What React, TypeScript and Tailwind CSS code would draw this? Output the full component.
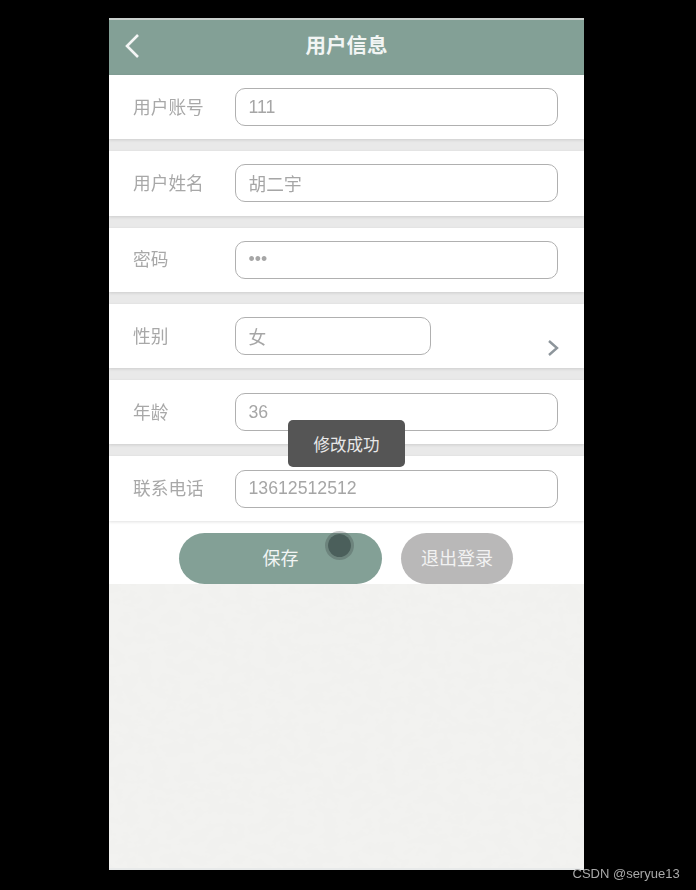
const fields = [
  { label: "用户账号", value: "111" },
  { label: "用户姓名", value: "胡二宇", cjk: true },
  { label: "密码", value: "•••" },
  { label: "性别", value: "女", cjk: true, select: true },
  { label: "年龄", value: "36" },
  { label: "联系电话", value: "13612512512" },
];

function Row({ label, value, cjk, select }: { label: string; value: string; cjk?: boolean; select?: boolean }) {
  return (
    <div className="relative flex h-[64.3px] items-center bg-white pl-[24px] mb-[12px] shadow-[0_1px_3px_rgba(0,0,0,0.12)]">
      <span className="w-[102px] shrink-0 pt-[2px] text-[17.7px] text-[#a8a8a8]">{label}</span>
      <div
        className={
          select
            ? "flex h-[38px] w-[196px] items-center rounded-[10px] border border-[#b0b0b0] pl-[12.5px] text-[17.7px] text-[#a6a6a6]"
            : "flex h-[38px] w-[323px] items-center rounded-[10px] border border-[#b0b0b0] pl-[12.5px] text-[17.7px] text-[#a6a6a6]"
        }
      >
        <span className={cjk ? "pt-[4px]" : ""}>{value}</span>
      </div>
      {select && (
        <svg className="absolute left-[438px] top-[35px] text-[#8d959b]" width="13" height="18" viewBox="0 0 13 18" fill="none" stroke="currentColor" strokeWidth="2.4">
          <path d="M2 2l8 7-8 7" />
        </svg>
      )}
    </div>
  );
}

export default function App() {
  return (
    <div className="relative h-[890px] w-[696px] overflow-hidden bg-black font-['Liberation_Sans','Noto_Sans_CJK_SC',sans-serif] pt-[18px]">
      <div className="relative ml-[109px] flex h-[852px] w-[475px] flex-col bg-[#f2f2f0] blur-[0.4px]">
        <div className="h-[2px] bg-[#c9cfcc]" />
        <div className="relative flex h-[55px] items-center justify-center bg-[#83a096]">
          <svg className="absolute left-[15px] top-[13px] text-[#f4f6f5]" width="16" height="26" viewBox="0 0 16 26" fill="none" stroke="currentColor" strokeWidth="2.6">
            <path d="M14 2L3 13l11 11" />
          </svg>
          <h1 className="-mt-[2px] text-[20.5px] font-bold text-[#f2f5f4]">用户信息</h1>
        </div>
        <div className="bg-[#e9e9e9]">
          {fields.map((f) => (
            <Row key={f.label} label={f.label} value={f.value} cjk={f.cjk} select={f.select} />
          ))}
        </div>
        <div className="-mt-[12px] flex h-[63px] items-end gap-[19px] bg-white pl-[70px]">
          <button className="h-[51px] w-[203px] rounded-full bg-[#83a096] pt-[2px] text-[18px] text-[#f2f5f4]">保存</button>
          <button className="h-[51px] w-[112px] rounded-full bg-[#b9b8b8] pt-[2px] text-[18px] text-[#f2f2f2]">退出登录</button>
        </div>
        {/* paper texture under the form */}
        <div className="min-h-0 flex-1 overflow-hidden border-b-2 border-[#e8eaea]">
          <svg width="475" height="286" className="block">
            <filter id="paper">
              <feTurbulence type="fractalNoise" baseFrequency="0.07 0.1" numOctaves="3" seed="4" />
              <feColorMatrix values="0 0 0 0 0.8  0 0 0 0 0.8  0 0 0 0 0.78  0.25 0 0 0 -0.08" />
            </filter>
            <rect width="475" height="286" filter="url(#paper)" />
          </svg>
        </div>
        <div className="absolute left-[179px] top-[402px] flex h-[47px] w-[117px] items-center justify-center rounded-[5px] bg-[#555555] pt-[3px] text-[16.5px] text-[#e8e8e8]">
          修改成功
        </div>
        <div className="absolute left-[216px] top-[513px] h-[29px] w-[29px] rounded-full border-[3px] border-[rgba(60,70,70,0.3)] bg-[#4b5f5b] bg-clip-padding" />
      </div>
      <div className="absolute left-[572.5px] top-[864px] text-[13px] text-[#a8a8a8]">CSDN @seryue13</div>
    </div>
  );
}
